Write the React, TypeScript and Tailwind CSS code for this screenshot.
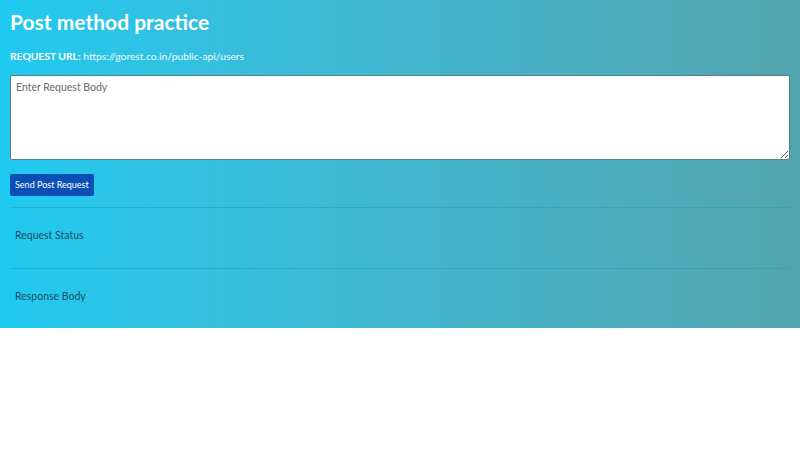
export default function App() {
  return (
    <div className="w-full bg-white" style={{ fontFamily: 'Lato, "Open Sans", sans-serif' }}>
      <div className="bg-gradient-to-r from-[#1ec9f0] to-[#52a4ae] px-[10px] pt-[7px] pb-[24px]">
        <h1 className="text-[21px] font-bold leading-[30px] text-white">Post method practice</h1>
        <p className="mt-[11px] text-[10.3px] leading-[16px] text-white">
          <span className="font-bold">REQUEST URL:</span>{" "}
          <span className="text-white/90">https://gorest.co.in/public-api/users</span>
        </p>
        <textarea
          placeholder="Enter Request Body"
          className="mt-[11px] block h-[85px] w-full rounded-[2px] border border-[#5f7f88] bg-white px-[5px] py-[4px] text-[10.5px] text-[#333] placeholder:text-[#6b6b6b] outline-none"
        />
        <button
          type="button"
          className="mt-[14px] rounded-[2px] bg-[#0b4fb6] px-[5px] py-[5px] text-[9px] leading-[12px] text-white"
        >
          Send Post Request
        </button>
        <div className="mt-[11px] border-t border-[#1a9fbf]/50" />
        <div className="px-[5px] pt-[19px] pb-[25px] text-[10.5px] font-normal leading-[16px] text-[#1d4f5e]">Request Status</div>
        <div className="border-t border-[#1a9fbf]/50" />
        <div className="px-[5px] pt-[19px] text-[10.5px] font-normal leading-[16px] text-[#1d4f5e]">Response Body</div>
      </div>
    </div>
  );
}
